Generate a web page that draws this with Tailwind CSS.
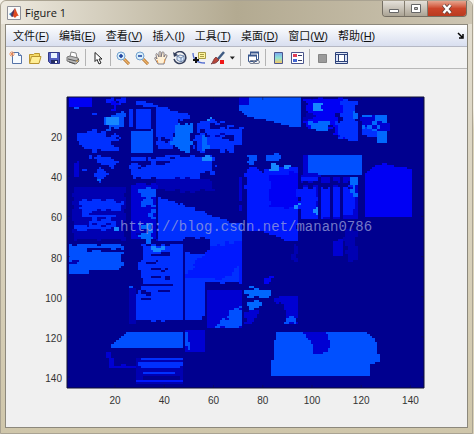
<!DOCTYPE html>
<html lang="zh-CN">

<head>
  <meta charset="UTF-8">
  <meta name="viewport" content="width=device-width, initial-scale=1.0">
  <title>Figure 1</title>
  <script src="https://cdn.jsdelivr.net/npm/@tailwindcss/browser@4"></script>
</head>

<body class="min-h-screen bg-linear-to-b from-[#f5f1e8] from-25% to-[#dbd3ba] to-30% pr-px font-['Liberation_Sans','Noto_Sans_CJK_SC',sans-serif]">
  <div class="min-h-screen flex flex-col rounded-t-md border border-[#aaa392] bg-linear-to-b from-[#e4dfd2] to-[#cfc6aa] px-1 pb-[5px]">
    <header class="h-[23px] flex items-start rounded-t-md bg-linear-to-r from-[#eeeae0] via-[#b3aa91] via-50% to-[#cdc5b2] -mx-1 px-[5px]">
      <div class="flex items-center gap-1 pt-[5px]">
        <svg class="size-[14px] ml-px" viewBox="0 0 14 14">
          <path d="M.5.5h13v13H.5z" fill="#fafafa" stroke="#8e9099" />
          <path d="M2 8l3-2 2 2-2 3z" fill="#3487bd" />
          <path d="M5 6l3-4-1 8-2 1-1-2z" fill="#5c2f50" />
          <path d="M8 2c1 1 2 6 4 8-2-1-3 1-4 2L6 10z" fill="#df4a20" />
        </svg>
        <h1 class="text-[11px] leading-[14px] text-[#171717] font-['Open_Sans',sans-serif]">Figure 1</h1>
      </div>
      <div class="ml-auto flex h-4 rounded-b border border-t-0 border-[#746e63] overflow-hidden">
        <button aria-label="最小化" class="w-[22px] flex justify-center items-center border-r border-[#827b6e] bg-linear-to-b from-[#e5e1da] via-[#c8c2b7] to-[#aaa394]">
          <svg class="w-3 h-3" viewBox="0 0 12 12"><path d="M1.500 6.500h9v3h-9z" fill="#fff" stroke="#666" /></svg>
        </button>
        <button aria-label="最大化" class="w-[23px] flex justify-center items-center border-r border-[#827b6e] bg-linear-to-b from-[#e5e1da] via-[#c8c2b7] to-[#aaa394]">
          <svg class="w-3 h-3" viewBox="0 0 12 12"><path d="M1.500 1.500h9v8h-9z" fill="#fff" stroke="#666" /><path d="M4.500 4.500h3v2h-3z" fill="#bbb" stroke="#666" /></svg>
        </button>
        <button aria-label="关闭" class="w-[38px] flex justify-center items-center bg-linear-to-b from-[#e5a48e] via-[#cc452a] to-[#b93a20]">
          <svg class="w-3 h-3" viewBox="0 0 12 12"><path d="M2.500 2l7 8M9.500 2l-7 8" stroke="#634640" stroke-width="4" /><path d="M2.500 2l7 8M9.500 2l-7 8" stroke="#fff" stroke-width="2.400" /></svg>
        </button>
      </div>
    </header>

    <main class="grow flex flex-col border border-[#8c887c] bg-[#f0f0f0]">
      <nav class="h-[22px] flex items-center gap-[10px] px-[7px] border-b border-[#b5b8c4] bg-linear-to-b from-white via-[#eef1f8] via-40% to-[#d9dff0] text-[11px] leading-[14px] text-[#111] whitespace-nowrap">
        <button>文件(<u>F</u>)</button>
        <button>编辑(<u>E</u>)</button>
        <button>查看(<u>V</u>)</button>
        <button>插入(<u>I</u>)</button>
        <button>工具(<u>T</u>)</button>
        <button>桌面(<u>D</u>)</button>
        <button>窗口(<u>W</u>)</button>
        <button>帮助(<u>H</u>)</button>
        <button aria-label="停靠" class="ml-auto -mr-1">
          <svg class="size-[7px]" viewBox="0 0 7 7"><path d="M1 1l4 4M6 2v4H2" fill="none" stroke="#000" stroke-width="1.500" /></svg>
        </button>
      </nav>

      <div role="toolbar" aria-label="图形工具栏" class="h-[22px] flex items-center border-b border-[#b8b8b8] bg-[#f2f2f2] [&>button]:w-[19px] [&>button]:flex [&>button]:justify-center [&_svg]:size-[14px] [&>i]:w-px [&>i]:h-[17px] [&>i]:ml-[3px] [&>i]:mr-[2px] [&>i]:bg-[#b4b4b4]">
        <button aria-label="新建图窗"><svg viewBox="0 0 14 14"><path d="M3.500 1.500h6l3 3v8h-9z" fill="#f7fbff" stroke="#5573a8" /><path d="M9.500 1.500v3h3" fill="#c8d8ef" stroke="#5573a8" /><path d="M0 3h6M3 0v6M1 1l4 4M5 1L1 5" stroke="#ed8950" stroke-width=".8" /></svg></button>
        <button aria-label="打开文件"><svg viewBox="0 0 14 14"><path d="M1.500 12V3.500h4l1-1h5v3" fill="#f5da65" stroke="#b99531" /><path d="M1.500 12.500l2-7h9.500l-2 7z" fill="#ffee94" stroke="#b99531" /></svg></button>
        <button aria-label="保存图窗"><svg viewBox="0 0 14 14"><path d="M1.500 1.500h11v11h-9l-2-2z" fill="#535fc0" stroke="#303886" /><path d="M4 2h6v5H4z" fill="#eaf4ff" /><path d="M4 9h7v3H4z" fill="#252d62" /><path d="M8 10h2v2H8z" fill="#fff" /></svg></button>
        <button aria-label="打印图窗"><svg viewBox="0 0 14 14"><path d="M4 6l1-5 5 1 1 5z" fill="#fff" stroke="#888" /><path d="M1 6l3-1 8 2 1 3-3 3-9-3z" fill="#b9b9b9" stroke="#777" /><path d="M2 8l8 2 3-2M3 11l6 2" fill="none" stroke="#555" /><path d="M10 10h2" stroke="#da9d35" /></svg></button>
        <i></i>
        <button aria-label="编辑绘图"><svg viewBox="0 0 14 14"><path d="M4 1.500v9l2-2 2 4.500 2-1-2-4h3z" fill="#fff" stroke="#222" /></svg></button>
        <i></i>
        <button aria-label="放大"><svg viewBox="0 0 14 14"><path d="M8 8l5 5" stroke="#ad6c27" stroke-width="3" /><path d="M8 8l5 5" stroke="#efb56b" stroke-width="1.500" /><circle cx="5" cy="5" r="4" fill="#d8effb" stroke="#74a2cf" /><path d="M3 5h4M5 3v4" stroke="#183d9b" stroke-width="1.500" /></svg></button>
        <button aria-label="缩小"><svg viewBox="0 0 14 14"><path d="M8 8l5 5" stroke="#ad6c27" stroke-width="3" /><path d="M8 8l5 5" stroke="#efb56b" stroke-width="1.500" /><circle cx="5" cy="5" r="4" fill="#d8effb" stroke="#74a2cf" /><path d="M3 5h4" stroke="#183d9b" stroke-width="1.500" /></svg></button>
        <button aria-label="平移"><svg viewBox="0 0 14 14"><path d="M4 13L1 8c-1-2 1-2 2 0L2 4c0-2 1-2 2 0l1 2V2c0-2 2-2 2 0v4l1-4c0-2 2-1 2 0v4l1-2c1-1 2 0 2 1l-2 4-1 4z" fill="#fff0d5" stroke="#655f6d" stroke-width=".8" /><path d="M4 12l-1-3M10 12l1-4" stroke="#e69d50" /></svg></button>
        <button aria-label="三维旋转"><svg viewBox="0 0 14 14"><path d="M2 3a6 6 0 1 1-1 5" fill="none" stroke="#343f5c" stroke-width="1.500" /><path d="M0 1l1 5 4-2z" fill="#343f5c" /><path d="M4 5l3-1 4 1v4l-3 2-4-2zM4 5l4 2 3-2M8 7v4" fill="#dcecff" stroke="#56719c" stroke-width=".8" /></svg></button>
        <button aria-label="数据游标"><svg viewBox="0 0 14 14"><path d="M6.500 1.500h7v6h-7z" fill="#fff5a0" stroke="#a99c47" /><path d="M8 3.500h4M8 5.500h4" stroke="#a99c47" /><path d="M1 2c0 6 3 10 12 10" fill="none" stroke="#536dd0" stroke-width="1.300" /><path d="M1 9h6M4 6v6" stroke="#111" stroke-width="2" /></svg></button>
        <button aria-label="刷亮"><svg viewBox="0 0 14 14"><path d="M13 1L7 8" stroke="#3e5b83" stroke-width="2.500" /><path d="M5 6l3 3-2 2c-2 2-4 1-6 2 2-1 2-5 5-7z" fill="#b74538" stroke="#652f36" stroke-width=".7" /><path d="M9 9h4v4H9z" fill="#f01818" /></svg></button>
        <button aria-label="刷亮选项" class="max-w-[10px]"><svg viewBox="0 0 14 14"><path d="M4 5h7l-3.500 4z" fill="#222" /></svg></button>
        <i></i>
        <button aria-label="链接绘图"><svg viewBox="0 0 14 14"><path d="M4.500 1.500h8v7h-8z" fill="#fff" stroke="#38578d" /><path d="M2.500 4.500h8v6h-8z" fill="#fff" stroke="#38578d" /><path d="M4 1.500h9M2 4.500h9" stroke="#38578d" stroke-width="2" /><rect x="3.500" y="9.500" width="5" height="3" rx="1.500" fill="none" stroke="#777f92" /><rect x="7.500" y="9.500" width="6" height="3" rx="1.500" fill="none" stroke="#777f92" /></svg></button>
        <i></i>
        <button aria-label="插入颜色栏"><svg viewBox="0 0 14 14"><defs><linearGradient id="bar" x2="0" y2="1"><stop stop-color="#7ba5f1" /><stop offset=".5" stop-color="#8fe5d3" /><stop offset="1" stop-color="#ffc45b" /></linearGradient></defs><path d="M3.500 1.500h8v11h-8z" fill="url(#bar)" stroke="#4b568c" /></svg></button>
        <button aria-label="插入图例"><svg viewBox="0 0 14 14"><path d="M1.500 1.500h12v11h-12z" fill="#fff" stroke="#4b568c" /><path d="M3 3h4v3H3z" fill="#e03f57" /><path d="M3 8h4v3H3z" fill="#4567d2" /><path d="M8 4.500h4M8 9.500h4" stroke="#333b68" /></svg></button>
        <i></i>
        <button aria-label="隐藏绘图工具"><svg viewBox="0 0 14 14"><path d="M3.500 3.500h8v8h-8z" fill="#9a9a9a" stroke="#858585" /></svg></button>
        <button aria-label="显示绘图工具"><svg viewBox="0 0 14 14"><path d="M1.500 1.500h12v11h-12z" fill="#dce4f5" stroke="#2c4179" /><path d="M4.500 3.500h6v7h-6z" fill="#fff" stroke="#2c4179" /><path d="M2 3.500h11M2 10.500h11" stroke="#2c4179" /></svg></button>
      </div>

      <svg id="figure" class="w-full h-auto" viewBox="6 69 461 358" role="img" aria-label="分类图像">
        <path d="M67 97h357v291H67z" fill="#00008f" />
        <g id="cells" shape-rendering="crispEdges"></g>
        <path d="M67 97h357v291H67z" fill="none" stroke="#111133" />
        <g id="ticks" class="text-[10px] fill-[#333]"></g>
        <text x="120" y="231" class="text-[14px] fill-[#9da2dc]/75 font-['Liberation_Mono',monospace]">http://blog.csdn.net/manan0786</text>
      </svg>
    </main>
  </div>

  <script>
    const shades = ['#00008f', '#0000b2', '#0000d2', '#0000f4', '#0018ff', '#0030ff', '#0050ff', '#0068ff', '#1688ff']
    // [shade, ragged edge in px, outline x,y ...]; two points make a box
    const regions = [
      // top left
      [3, 0, 69, 98, 92, 107], [6, 0, 74, 107, 79, 109],
      [4, 1, 106, 98, 114, 102], [4, 2, 117, 98, 126, 103], [3, 2, 112, 101, 117, 110], [5, 0, 91, 113, 96, 115],
      [6, 2, 101, 117, 111, 114, 123, 113, 123, 125, 116, 130, 107, 128], [8, 1, 107, 117, 118, 125],
      [5, 3, 79, 135, 93, 131, 105, 131, 110, 137, 120, 135, 113, 142, 119, 149, 107, 151, 82, 151],
      [5, 0, 128, 109, 133, 127], [5, 0, 136, 109, 151, 129], [6, 0, 131, 131, 151, 153],
      [5, 1, 136, 101, 145, 101, 157, 105, 188, 114, 190, 118, 178, 120, 172, 136, 174, 149, 156, 149, 156, 108, 136, 105],
      [0, 0, 152, 107, 155, 153], [0, 2, 158, 139, 170, 142], [6, 0, 150, 129, 152, 153],
      [7, 2, 176, 125, 184, 122, 192, 124, 191, 138, 192, 151, 186, 153, 173, 145],
      [5, 3, 193, 139, 202, 121, 216, 121, 227, 126, 242, 130, 241, 143, 232, 152, 195, 151],
      [0, 3, 194, 132, 207, 135], [0, 2, 211, 125, 227, 128], [1, 2, 207, 135, 230, 137], [7, 1, 202, 136, 208, 151], [8, 1, 206, 119, 211, 121], [0, 1, 224, 134, 235, 140],
      // top middle and right
      [6, 0, 240, 98, 301, 98, 301, 127, 292, 127, 282, 124, 267, 120, 248, 117, 240, 111], [2, 0, 239, 98, 248, 106],
      [3, 2, 305, 99, 357, 99, 357, 141, 333, 137, 335, 128, 306, 127],
      [5, 2, 340, 99, 357, 99, 357, 141, 338, 137, 336, 124, 342, 113],
      [7, 2, 306, 123, 330, 123, 329, 131, 318, 131], [8, 1, 314, 103, 322, 111], [1, 2, 305, 114, 314, 119], [7, 1, 353, 110, 357, 119], [0, 2, 338, 111, 341, 125],
      [7, 1, 362, 115, 387, 115, 387, 143, 379, 143, 375, 138, 362, 136], [2, 3, 362, 116, 375, 127], [2, 3, 377, 124, 387, 132], [5, 2, 363, 129, 377, 137],
      // second band
      [5, 2, 88, 157, 112, 157, 118, 164, 113, 168, 98, 163], [5, 2, 97, 167, 108, 174, 102, 182, 97, 178],
      [2, 1, 74, 163, 79, 178], [5, 0, 81, 169, 87, 171], [7, 0, 97, 179, 101, 182],
      [5, 1, 132, 157, 145, 161], [5, 3, 131, 165, 145, 168, 155, 163, 159, 176, 144, 178, 131, 175],
      [5, 2, 150, 157, 212, 157, 215, 172, 201, 175, 199, 184, 184, 181, 150, 178], [0, 2, 154, 161, 170, 164], [0, 1, 202, 173, 209, 176], [8, 1, 203, 157, 211, 162],
      [6, 1, 247, 155, 257, 155, 254, 164, 247, 164], [6, 1, 266, 155, 283, 155, 278, 161, 266, 162],
      [4, 1, 246, 169, 254, 166, 262, 173, 268, 168, 298, 168, 298, 242, 280, 239, 265, 232, 247, 231],
      [3, 2, 270, 174, 298, 208], [8, 1, 271, 164, 278, 170], [8, 1, 284, 164, 290, 169], [8, 1, 294, 204, 304, 210],
      [6, 0, 303, 155, 362, 175], [2, 0, 303, 155, 308, 173], [2, 1, 300, 174, 320, 177],
      [2, 0, 300, 178, 357, 219], [4, 1, 300, 187, 317, 219], [4, 1, 320, 187, 330, 219], [4, 0, 332, 187, 340, 217], [4, 2, 342, 187, 354, 216],
      [4, 1, 301, 178, 317, 182], [0, 2, 301, 183, 349, 187], [7, 1, 349, 178, 357, 178, 357, 199, 353, 197], [0, 0, 317, 177, 320, 220], [0, 0, 330, 177, 332, 220], [0, 0, 340, 177, 342, 220], [8, 1, 315, 208, 318, 215],
      [3, 0, 365, 175, 376, 165, 385, 164, 398, 167, 411, 169, 411, 217, 365, 217],
      // left middle
      [1, 1, 73, 187, 125, 240], [5, 2, 81, 200, 113, 200, 122, 203, 122, 211, 80, 213], [5, 0, 81, 216, 117, 218], [5, 2, 90, 219, 117, 226], [5, 1, 75, 227, 113, 230], [8, 0, 114, 228, 118, 232],
      [2, 1, 131, 184, 158, 240],
      [6, 1, 69, 244, 123, 244, 123, 267, 111, 271, 92, 269, 88, 274, 69, 273], [0, 1, 86, 248, 122, 251], [1, 1, 71, 260, 79, 263],
      [6, 2, 141, 187, 154, 197], [6, 2, 141, 199, 155, 207], [6, 1, 150, 208, 155, 219], [7, 2, 140, 224, 153, 241], [1, 2, 139, 230, 147, 235],
      [1, 2, 157, 179, 214, 179, 214, 191, 157, 191],
      [5, 1, 158, 197, 180, 204, 202, 212, 230, 222, 242, 224, 242, 282, 207, 285, 207, 308, 202, 320, 185, 320, 185, 242, 158, 241],
      [4, 2, 210, 246, 240, 240, 241, 265, 218, 281, 188, 272], [4, 2, 188, 268, 223, 277],
      [0, 1, 185, 236, 209, 240, 210, 249, 203, 253, 185, 253],
      [5, 1, 141, 244, 183, 244, 183, 320, 136, 320, 136, 295, 144, 284, 139, 263, 144, 255],
      [8, 1, 152, 246, 165, 250], [0, 1, 151, 252, 170, 255], [0, 1, 146, 260, 160, 262], [0, 1, 150, 268, 167, 270], [0, 1, 150, 276, 173, 278], [0, 0, 139, 283, 174, 285], [0, 1, 142, 291, 152, 294], [0, 0, 159, 289, 170, 291], [0, 0, 142, 298, 150, 300],
      [0, 0, 182, 240, 185, 330], [0, 0, 155, 190, 158, 240], [6, 0, 128, 285, 133, 287], [1, 0, 128, 288, 135, 323],
      [2, 0, 207, 290, 242, 328], [0, 1, 205, 283, 242, 290], [0, 0, 204, 285, 207, 328],
      [6, 2, 230, 308, 242, 308, 242, 328, 215, 328, 218, 321, 229, 318],
      [2, 1, 240, 177, 242, 212], [4, 0, 240, 245, 242, 284],
      // bottom middle
      [7, 2, 247, 288, 271, 288, 271, 295, 246, 297], [7, 2, 247, 300, 264, 300, 258, 308, 248, 309], [2, 1, 246, 310, 260, 310, 253, 323, 246, 324],
      [2, 1, 273, 296, 298, 324], [0, 2, 273, 302, 286, 307, 286, 325, 272, 325], [6, 2, 286, 316, 298, 324], [3, 2, 264, 276, 272, 282],
      [2, 1, 333, 240, 343, 256], [1, 2, 345, 231, 356, 261], [1, 2, 292, 245, 298, 260],
      [2, 0, 185, 330, 205, 352], [6, 1, 186, 332, 189, 351],
      // bottom
      [6, 0, 126, 332, 183, 332, 183, 348, 109, 348],
      [2, 1, 108, 351, 112, 367], [2, 1, 108, 365, 136, 368], [1, 0, 136, 358, 183, 384], [5, 0, 140, 358, 183, 360], [5, 1, 139, 362, 181, 368], [5, 0, 143, 372, 175, 374], [4, 0, 137, 380, 183, 382], [0, 0, 143, 375, 180, 379],
      [6, 0, 276, 332, 367, 332, 377, 342, 376, 352, 379, 354, 379, 362, 370, 364, 369, 376, 271, 376, 273, 356],
      [2, 1, 302, 332, 326, 332, 330, 342, 328, 352, 315, 354, 312, 344],
    ]

    const N = 145
    const left = 67, top0 = 97
    const cw = 357 / N, ch = 291 / N

    const noise = (a, b) => {
      const v = Math.sin(a * 127.1 + b * 311.7) * 43758.5453
      return (v - Math.floor(v)) * 2 - 1
    }

    const inside = (x, y, p) => {
      if (p.length === 4) {
        return x >= p[0] && x <= p[2] && y >= p[1] && y <= p[3]
      }
      let hit = false
      for (let i = 0, j = p.length - 2; i < p.length; j = i, i += 2) {
        if ((p[i + 1] > y) !== (p[j + 1] > y) && x < (p[j] - p[i]) * (y - p[i + 1]) / (p[j + 1] - p[i + 1]) + p[i]) {
          hit = !hit
        }
      }
      return hit
    }

    const shadeAt = (row, col) => {
      const x = left + (col + 0.5) * cw
      const y = top0 + (row + 0.5) * ch
      let shade = 0
      regions.forEach(([s, rough, ...p]) => {
        const dx = noise(Math.floor(row / 2), Math.floor(col / 4)) * rough
        const dy = noise(Math.floor(col / 2), Math.floor(row / 5) + 9) * rough
        if (inside(x + dx, y + dy, p)) shade = s
      })
      return shade
    }

    let cells = ''
    for (let row = 0; row < N; row++) {
      let start = 0
      let current = shadeAt(row, 0)
      for (let col = 1; col <= N; col++) {
        const next = col < N ? shadeAt(row, col) : -1
        if (next === current) continue
        if (current > 0) {
          cells += `<rect x="${left + start * cw}" y="${top0 + row * ch}" width="${(col - start) * cw}" height="${ch}" fill="${shades[current]}"/>`
        }
        start = col
        current = next
      }
    }
    document.getElementById('cells').innerHTML = cells

    let ticks = ''
    for (let v = 20; v <= 140; v += 20) {
      const x = left + (v - 0.5) * cw
      const y = top0 + (v - 0.5) * ch
      ticks += `<text x="${x}" y="404" text-anchor="middle">${v}</text>`
      ticks += `<text x="62" y="${y + 5}" text-anchor="end">${v}</text>`
      ticks += `<path d="M${x} 388v-3M67 ${y}h3M424 ${y}h-3M${x} 97v3" stroke="#111144" stroke-width=".5"/>`
    }
    document.getElementById('ticks').innerHTML = ticks
  </script>
</body>

</html>
